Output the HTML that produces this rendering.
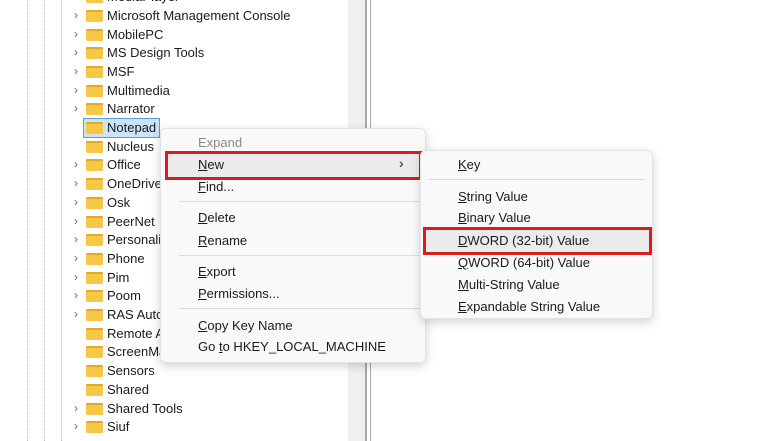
<!DOCTYPE html>
<html style="overflow:hidden;height:441px"><head><style>
*{margin:0;padding:0;box-sizing:border-box}
body{width:768px;height:441px;overflow:hidden;background:#fff;font-family:"Liberation Sans",sans-serif;font-size:13px;color:#1a1a1a;position:relative}
.vl{position:absolute;top:0;height:441px;border-left:1px dotted #b8b8b8}
.row{position:absolute;left:0;height:19px;line-height:19px;white-space:nowrap}
.chev{position:absolute;left:74px;top:0;color:#666;font-size:12px}
.fold{position:absolute;left:86px;top:4px;width:17px;height:12px;background:#f7c847;border-radius:1px;border-top:2px solid #e5a823}
.txt{position:absolute;left:107px;top:0}
.menu{position:absolute;background:#f9f9f9;border:1px solid #e3e3e3;border-radius:6px;box-shadow:0 3px 10px rgba(0,0,0,.18)}
.mi{position:absolute;left:37px;white-space:nowrap;line-height:18px}
.sep{position:absolute;height:1px;background:#dcdcdc}
.hl{position:absolute;background:#ebebeb;border:3px solid #d91c1c}
u{text-decoration:underline}
</style></head><body>
<div class="vl" style="left:27px"></div>
<div class="vl" style="left:44px"></div>
<div class="vl" style="left:61px"></div>
<div style="position:absolute;left:348px;top:0;width:17px;height:441px;background:#f0f0f0"></div>
<div style="position:absolute;left:365px;top:0;width:2px;height:441px;background:#a8a8a8"></div>
<div style="position:absolute;left:370px;top:0;width:1px;height:441px;background:#a8a8a8"></div>

<div class="row" style="top:-13px"><span class="chev">›</span><span class="fold"></span><span class="txt">MediaPlayer</span></div>
<div class="row" style="top:6px"><span class="chev">›</span><span class="fold"></span><span class="txt">Microsoft Management Console</span></div>
<div class="row" style="top:25px"><span class="chev">›</span><span class="fold"></span><span class="txt">MobilePC</span></div>
<div class="row" style="top:43px"><span class="chev">›</span><span class="fold"></span><span class="txt">MS Design Tools</span></div>
<div class="row" style="top:62px"><span class="chev">›</span><span class="fold"></span><span class="txt">MSF</span></div>
<div class="row" style="top:81px"><span class="chev">›</span><span class="fold"></span><span class="txt">Multimedia</span></div>
<div class="row" style="top:99px"><span class="chev">›</span><span class="fold"></span><span class="txt">Narrator</span></div>
<div style="position:absolute;left:83px;top:118px;width:77px;height:20px;background:#cce4f7;border:1px solid #5a9bd5"></div>
<div class="row" style="top:118px"><span class="fold"></span><span class="txt">Notepad</span></div>
<div class="row" style="top:137px"><span class="fold"></span><span class="txt">Nucleus</span></div>
<div class="row" style="top:155px"><span class="chev">›</span><span class="fold"></span><span class="txt">Office</span></div>
<div class="row" style="top:174px"><span class="chev">›</span><span class="fold"></span><span class="txt">OneDrive</span></div>
<div class="row" style="top:193px"><span class="chev">›</span><span class="fold"></span><span class="txt">Osk</span></div>
<div class="row" style="top:212px"><span class="chev">›</span><span class="fold"></span><span class="txt">PeerNet</span></div>
<div class="row" style="top:230px"><span class="chev">›</span><span class="fold"></span><span class="txt">Personaliz</span></div>
<div class="row" style="top:249px"><span class="chev">›</span><span class="fold"></span><span class="txt">Phone</span></div>
<div class="row" style="top:268px"><span class="chev">›</span><span class="fold"></span><span class="txt">Pim</span></div>
<div class="row" style="top:286px"><span class="chev">›</span><span class="fold"></span><span class="txt">Poom</span></div>
<div class="row" style="top:305px"><span class="chev">›</span><span class="fold"></span><span class="txt">RAS Auto</span></div>
<div class="row" style="top:324px"><span class="fold"></span><span class="txt">Remote A</span></div>
<div class="row" style="top:342px"><span class="fold"></span><span class="txt">ScreenMa</span></div>
<div class="row" style="top:361px"><span class="fold"></span><span class="txt">Sensors</span></div>
<div class="row" style="top:380px"><span class="fold"></span><span class="txt">Shared</span></div>
<div class="row" style="top:399px"><span class="chev">›</span><span class="fold"></span><span class="txt">Shared Tools</span></div>
<div class="row" style="top:417px"><span class="chev">›</span><span class="fold"></span><span class="txt">Siuf</span></div>
<div class="row" style="top:436px;height:5px;overflow:hidden"><span class="fold"></span></div>

<div class="menu" style="left:160px;top:128px;width:266px;height:235px">
 <div class="mi" style="top:5px;color:#8a8a8a">Expand</div>
 <div class="hl" style="left:4px;top:22px;width:257px;height:29px"></div>
 <div class="mi" style="top:27px"><u>N</u>ew</div>
 <div style="position:absolute;left:238px;top:26px;font-size:14px">›</div>
 <div class="mi" style="top:49px"><u>F</u>ind...</div>
 <div class="sep" style="left:18px;top:72px;width:246px"></div>
 <div class="mi" style="top:80px"><u>D</u>elete</div>
 <div class="mi" style="top:103px"><u>R</u>ename</div>
 <div class="sep" style="left:18px;top:126px;width:246px"></div>
 <div class="mi" style="top:134px"><u>E</u>xport</div>
 <div class="mi" style="top:156px"><u>P</u>ermissions...</div>
 <div class="sep" style="left:18px;top:179px;width:246px"></div>
 <div class="mi" style="top:188px"><u>C</u>opy Key Name</div>
 <div class="mi" style="top:209px">Go <u>t</u>o HKEY_LOCAL_MACHINE</div>
</div>

<div class="menu" style="left:420px;top:150px;width:233px;height:169px">
 <div class="mi" style="top:5px"><u>K</u>ey</div>
 <div class="sep" style="left:8px;top:28px;width:216px"></div>
 <div class="mi" style="top:37px"><u>S</u>tring Value</div>
 <div class="mi" style="top:58px"><u>B</u>inary Value</div>
 <div class="hl" style="left:2px;top:76px;width:229px;height:28px"></div>
 <div class="mi" style="top:81px"><u>D</u>WORD (32-bit) Value</div>
 <div class="mi" style="top:103px"><u>Q</u>WORD (64-bit) Value</div>
 <div class="mi" style="top:125px"><u>M</u>ulti-String Value</div>
 <div class="mi" style="top:147px"><u>E</u>xpandable String Value</div>
</div>
</body></html>
